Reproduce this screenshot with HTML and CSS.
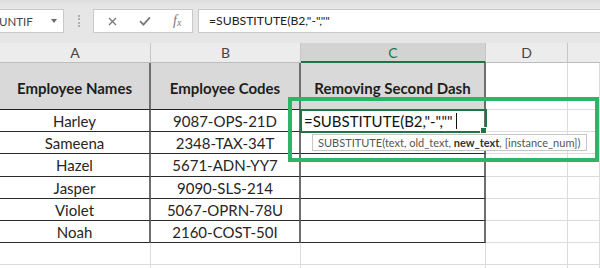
FILE: index.html
```html
<!DOCTYPE html>
<html>
<head>
<meta charset="UTF-8">
<title>SUBSTITUTE - Removing Second Dash</title>
<link rel="stylesheet" href="styles.css">
</head>
<body>
<div class="topbar">
	<div class="namebox"><span class="nb-text">UNTIF</span><span class="nb-arrow"></span></div>
	<div class="grip"></div>
	<div class="fbtns">
		<svg class="ico" width="9" height="9" viewBox="0 0 9 9"><path d="M1 1L8 8M8 1L1 8" stroke="#7a7a7a" stroke-width="1.4" fill="none"/></svg>
		<svg class="ico" width="12" height="10" viewBox="0 0 12 10"><path d="M1 5.2L4.4 8.6L11 1.4" stroke="#7a7a7a" stroke-width="1.8" fill="none"/></svg>
		<span class="fx">f<span class="fx-x">x</span></span>
	</div>
	<div class="finput">=SUBSTITUTE(B2,"-",""</div>
</div>

<div class="sheet">
	<!-- column headers -->
	<div class="ch">A</div>
	<div class="ch">B</div>
	<div class="ch ch-sel">C</div>
	<div class="ch">D</div>
	<div class="ch ch-last"></div>

	<!-- table header -->
	<div class="th">Employee Names</div>
	<div class="th">Employee Codes</div>
	<div class="th">Removing Second Dash</div>
	<div class="gc"></div>
	<div class="gc"></div>

	<div class="td">Harley</div>
	<div class="td">9087-OPS-21D</div>
	<div class="td active">=SUBSTITUTE(B2,"-",""<span class="caret"></span><span class="handle"></span></div>
	<div class="gc"></div>
	<div class="gc"></div>

	<div class="td">Sameena</div>
	<div class="td">2348-TAX-34T</div>
	<div class="td"></div>
	<div class="gc"></div>
	<div class="gc"></div>

	<div class="td">Hazel</div>
	<div class="td">5671-ADN-YY7</div>
	<div class="td"></div>
	<div class="gc"></div>
	<div class="gc"></div>

	<div class="td">Jasper</div>
	<div class="td">9090-SLS-214</div>
	<div class="td"></div>
	<div class="gc"></div>
	<div class="gc"></div>

	<div class="td">Violet</div>
	<div class="td">5067-OPRN-78U</div>
	<div class="td"></div>
	<div class="gc"></div>
	<div class="gc"></div>

	<div class="td">Noah</div>
	<div class="td">2160-COST-50I</div>
	<div class="td"></div>
	<div class="gc"></div>
	<div class="gc"></div>

	<div class="gc"></div>
	<div class="gc"></div>
	<div class="gc"></div>
	<div class="gc"></div>
	<div class="gc"></div>

	<div class="gc"></div>
	<div class="gc"></div>
	<div class="gc"></div>
	<div class="gc"></div>
	<div class="gc"></div>
</div>

<div class="tip">SUBSTITUTE(text, old_text, <b>new_text</b>, [instance_num])</div>
<div class="mark"></div>
</body>
</html>
```

FILE: styles.css
```css
/* excel sheet look */
html, body {margin:0; padding:0;}
body {width:600px; height:268px; overflow:hidden; position:relative; background:#e6e6e6; font-family:Lato, "Liberation Sans", sans-serif; color:#222;}

.topbar {display:flex; align-items:flex-start; height:43px; padding-top:9px; box-sizing:border-box; background:linear-gradient(#dedede, #e6e6e6 6px);}
.namebox {width:64px; height:24px; box-sizing:border-box; background:#fff; border:1px solid #c9c9c9; border-left:0; display:flex; align-items:center; justify-content:space-between; padding-right:6px; font-size:11.5px; color:#444;}
.nb-text {margin-left:-1px;}
.nb-arrow {width:0; height:0; border-top:4px solid #6a6a6a; border-left:3.5px solid transparent; border-right:3.5px solid transparent;}
.grip {margin:6px 0 0 14px; width:0; height:12px; border-left:2px dotted #b0b0b0;}
.fbtns {margin-left:13px; width:100px; height:24px; box-sizing:border-box; background:#fff; border:1px solid #c9c9c9; display:flex; align-items:center; gap:22px; padding-left:14px;}
.fx {font-family:"Liberation Serif", serif; font-style:italic; font-size:14px; color:#7a7a7a; line-height:1;}
.fx-x {font-size:10px; position:relative; top:1px;}
.finput {margin-left:5px; flex:1; height:24px; box-sizing:border-box; background:#fff; border:1px solid #c9c9c9; border-right:0; padding-left:10px; font-size:12.2px; line-height:22px; color:#222;}

.sheet {display:grid; grid-template-columns:151px 150px 185px 82px 32px; grid-template-rows:20px 47px 22px 22px 23px 22px 22px 22px 22px 5px;}
.sheet > div {box-sizing:border-box; display:flex; align-items:center; justify-content:center; white-space:nowrap;}

.ch {background:#ececec; border-right:1px solid #c6c6c6; border-bottom:1px solid #bdbdbd; font-size:14px; color:#444;}
.ch-sel {background:#d3d3d3; color:#217346; border-bottom:2px solid #217346;}
.ch-last {border-right:0;}

.th {background:#d9d9d9; font-weight:bold; font-size:15px; color:#1e1e1e; border-right:2px solid #6e6e6e; border-bottom:1px solid #222; padding-top:4px;}
.td {background:#fff; font-size:15px; color:#262626; border-right:2px solid #6e6e6e; border-bottom:1px solid #2a2a2a;}
.gc {background:#fff; border-right:1px solid #dcdcdc; border-bottom:1px solid #dcdcdc;}

.sheet > .active {justify-content:flex-start; padding-left:3px; position:relative; outline:2px solid #217346; outline-offset:-1px; color:#111;}
.caret {display:inline-block; width:1px; height:16px; background:#111; margin-left:3px;}
.handle {position:absolute; right:-3px; bottom:-3px; width:5px; height:5px; background:#217346; border:1px solid #fff;}

.tip {position:absolute; left:312px; top:134px; width:275px; height:17px; box-sizing:border-box; background:#fff; border:1px solid #c6c6c6; padding-left:5px; font-size:11px; line-height:15px; color:#555; white-space:nowrap;}
.tip b {color:#333;}
.mark {position:absolute; left:288px; top:97px; width:311px; height:65px; box-sizing:border-box; border:4px solid #2eb466;}
```
